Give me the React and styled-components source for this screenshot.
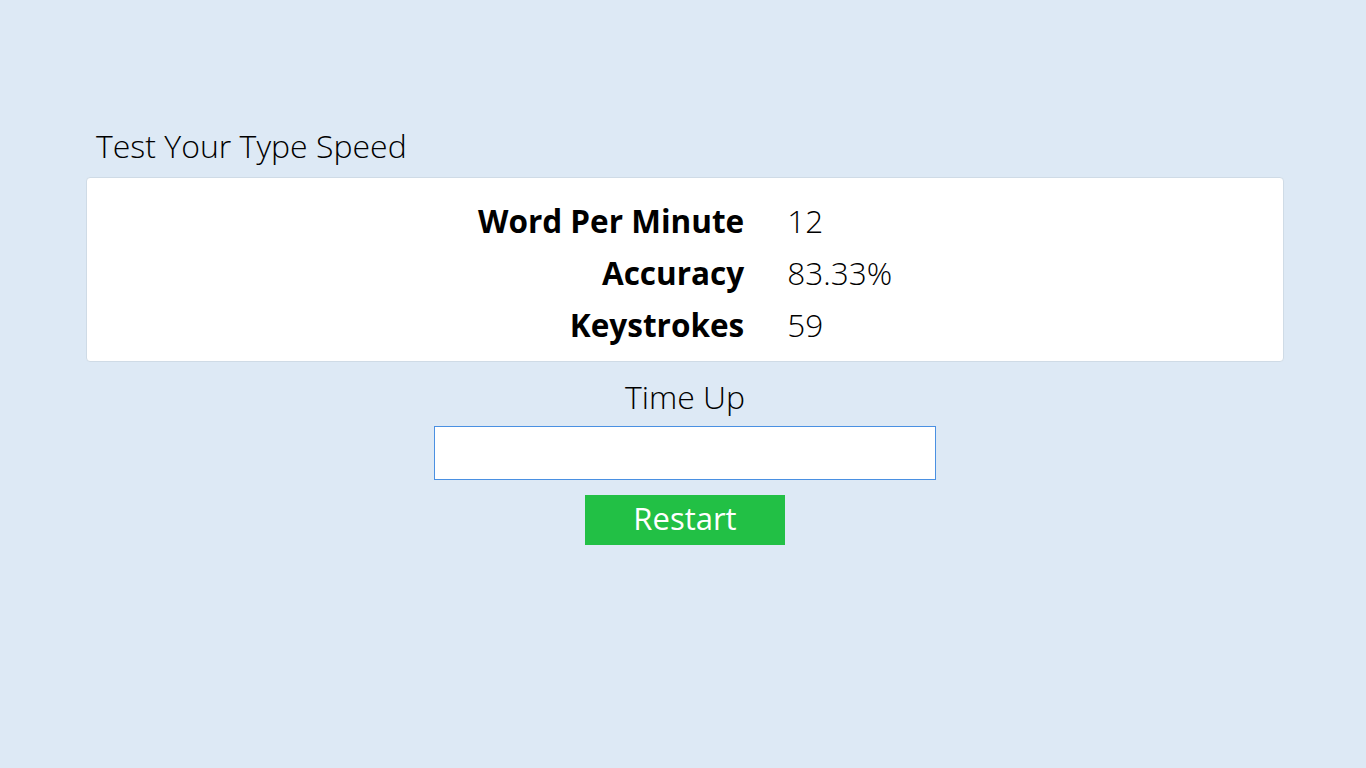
import styled, {createGlobalStyle} from "styled-components";

const GlobalStyle = createGlobalStyle`
    body {
        margin: 0;
        background: #dde9f5;
        font-family: "Open Sans", "Noto Sans", sans-serif;
        color: #000;
    }
`;

const Page = styled.main`
    width: 1198px;
    margin-left: 86px;
    padding-top: 126px;
    display: flex;
    flex-direction: column;
    align-items: center;
`;

const Title = styled.h1`
    align-self: stretch;
    margin: 0 0 11px;
    padding-left: 10px;
    font-size: 32px;
    font-weight: 300;
    line-height: 40px;
`;

const Card = styled.section`
    align-self: stretch;
    background: #fff;
    border: 1px solid #cfdbe6;
    border-radius: 4px;
    padding: 16px 0 11px;
    display: flex;
    justify-content: center;
`;

const Stats = styled.div`
    display: grid;
    grid-template-columns: auto auto;
    column-gap: 43px;
    grid-auto-rows: 52px;
    align-items: center;
    font-size: 31.5px;
`;

const Label = styled.div`
    text-align: right;
    font-weight: 700;
`;

const Value = styled.div`
    font-weight: 300;
`;

const Status = styled.div`
    margin-top: 15px;
    font-size: 32px;
    font-weight: 300;
    line-height: 40px;
`;

const TypeInput = styled.input`
    margin-top: 9px;
    width: 502px;
    height: 54px;
    box-sizing: border-box;
    border: 1px solid #4a90e2;
    background: #fff;
    font-family: inherit;
    font-size: 24px;
    padding: 0 10px;
    outline: none;
`;

const RestartButton = styled.button`
    margin-top: 15px;
    width: 200px;
    height: 50px;
    border: none;
    background: #22c045;
    color: #fff;
    font-family: inherit;
    font-size: 31px;
    font-weight: 400;
    line-height: 1;
    padding: 0 0 4px;
    cursor: pointer;
`;

const stats = [
    {label: "Word Per Minute", value: "12"},
    {label: "Accuracy", value: "83.33%"},
    {label: "Keystrokes", value: "59"},
];

export default function App() {
    return (
        <>
            <GlobalStyle/>
            <Page>
                <Title>Test Your Type Speed</Title>
                <Card>
                    <Stats>
                        {stats.map(s => [
                            <Label key={s.label + "-l"}>{s.label}</Label>,
                            <Value key={s.label + "-v"}>{s.value}</Value>,
                        ])}
                    </Stats>
                </Card>
                <Status>Time Up</Status>
                <TypeInput/>
                <RestartButton>Restart</RestartButton>
            </Page>
        </>
    );
}
